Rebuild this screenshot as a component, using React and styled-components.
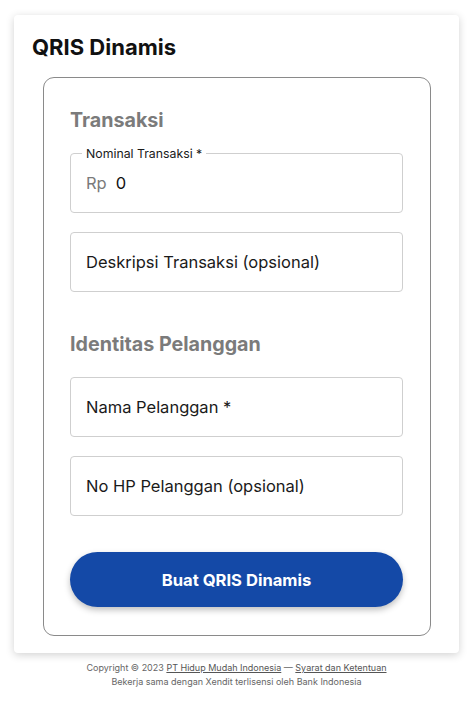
import React from "react";
import styled, { createGlobalStyle } from "styled-components";

const GlobalStyle = createGlobalStyle`
  * { box-sizing: border-box; }
  body {
    margin: 0;
    background: #ffffff;
    font-family: Inter, "Noto Sans", sans-serif;
    color: #111;
  }
`;

const App = () => {
  return (
    <>
      <GlobalStyle />
      <Page>
        <Card>
          <Title>QRIS Dinamis</Title>
          <Form>
            <SectionTitle>Transaksi</SectionTitle>
            <Field>
              <Legend>Nominal Transaksi *</Legend>
              <Prefix>Rp</Prefix>
              <Value>0</Value>
            </Field>
            <Field $gap>
              <Placeholder>Deskripsi Transaksi (opsional)</Placeholder>
            </Field>
            <SectionTitle $spaced>Identitas Pelanggan</SectionTitle>
            <Field>
              <Placeholder>Nama Pelanggan *</Placeholder>
            </Field>
            <Field $gap>
              <Placeholder>No HP Pelanggan (opsional)</Placeholder>
            </Field>
            <SubmitButton type="button">Buat QRIS Dinamis</SubmitButton>
          </Form>
        </Card>
        <Footer>
          <div>
            Copyright © 2023 <a href="#">PT Hidup Mudah Indonesia</a> —{" "}
            <a href="#">Syarat dan Ketentuan</a>
          </div>
          <div>Bekerja sama dengan Xendit terlisensi oleh Bank Indonesia</div>
        </Footer>
      </Page>
    </>
  );
};

const Page = styled.div`
  padding: 15px 15px 0 14px;
`;

const Card = styled.section`
  background: #fff;
  border-radius: 4px;
  box-shadow: 0 2px 8px rgba(0, 0, 0, 0.18);
  padding: 19px 28px 17px 29px;
`;

const Title = styled.h1`
  margin: 0 0 0 -11px;
  font-size: 22px;
  font-weight: 700;
  line-height: 26px;
  color: #111;
`;

const Form = styled.div`
  margin-top: 17px;
  border: 1px solid #8a8a8a;
  border-radius: 11px;
  padding: 29px 27px 28px 26px;
  display: flex;
  flex-direction: column;
`;

const SectionTitle = styled.h2`
  margin: ${(p) => (p.$spaced ? "39px 0 20px" : "0 0 20px")};
  font-size: 19.7px;
  font-weight: 700;
  line-height: 26px;
  color: #7b7b7b;
`;

const Field = styled.div`
  position: relative;
  height: 60px;
  margin-top: ${(p) => (p.$gap ? "19px" : "0")};
  border: 1px solid #cfcfcf;
  border-radius: 4px;
  padding: 0 15px;
  display: flex;
  align-items: center;
  gap: 9px;
  font-size: 16.5px;
`;

const Legend = styled.span`
  position: absolute;
  top: -8px;
  left: 11px;
  padding: 0 4px;
  background: #fff;
  font-size: 12.3px;
  line-height: 15px;
  color: #1a1a1a;
`;

const Prefix = styled.span`
  color: #7a7a7a;
`;

const Value = styled.span`
  color: #111;
`;

const Placeholder = styled.span`
  color: #1a1a1a;
`;

const SubmitButton = styled.button`
  margin-top: 36px;
  height: 55px;
  border: none;
  border-radius: 28px;
  background: #1449a7;
  color: #fff;
  font-family: Inter, sans-serif;
  font-size: 16.6px;
  font-weight: 700;
  box-shadow: 0 3px 6px rgba(0, 0, 0, 0.25);
`;

const Footer = styled.footer`
  margin-top: 8px;
  text-align: center;
  font-size: 9px;
  line-height: 14px;
  color: #666;
  a {
    color: #555;
  }
`;

export default App;
